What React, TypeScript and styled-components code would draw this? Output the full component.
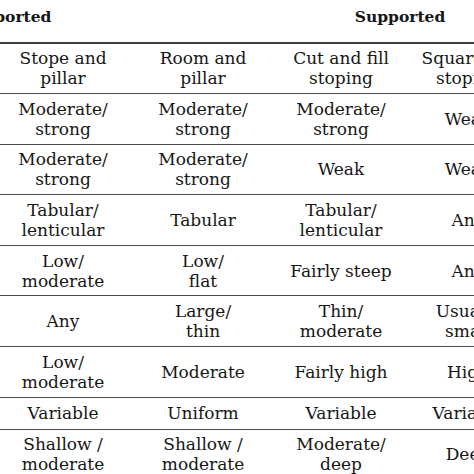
import { createGlobalStyle } from 'styled-components';
import styled from 'styled-components';

const serif = `"DejaVu Serif", "Liberation Serif", serif`;

const GlobalStyle = createGlobalStyle`
  html, body {
    margin: 0;
    padding: 0;
    background: #ffffff;
  }
  body {
    font-family: ${serif};
    color: #1c1c1c;
  }
`;

const Viewport = styled.div`
  width: 474px;
  height: 474px;
  overflow: hidden;
  background: #ffffff;
`;

// the table is wider than the crop; the two leftmost method columns sit off-screen
const Table = styled.table`
  margin-left: -283px;
  width: 810px;
  table-layout: fixed;
  border-collapse: collapse;
  font-family: ${serif};
  font-size: 17px;
  line-height: 20px;
  color: #161616;
`;

const GroupCell = styled.th`
  padding: 7px 0 14.5px;
  font-family: ${serif};
  font-size: 15.5px;
  font-weight: 700;
  text-align: center;
  white-space: nowrap;
  border-bottom: 2.2px solid #3c3c3c;
`;

const Cell = styled.td<{ $single?: boolean }>`
  padding: ${(p) => (p.$single ? '5.5px 0' : '4.8px 0')};
  font-family: ${serif};
  text-align: center;
  vertical-align: middle;
  white-space: nowrap;
  font-weight: 400;
  border-bottom: 1.6px solid #4a4a4a;
`;

const widths = [138, 138, 140, 140, 136, 118];

const rows: string[][][] = [
  [['Sublevel', 'stoping'], ['Shrinkage', 'stoping'], ['Stope and', 'pillar'], ['Room and', 'pillar'], ['Cut and fill', 'stoping'], ['Square set', 'stoping']],
  [['Moderate/', 'strong'], ['Strong'], ['Moderate/', 'strong'], ['Moderate/', 'strong'], ['Moderate/', 'strong'], ['Weak']],
  [['Fairly', 'strong'], ['Strong/', 'moderate'], ['Moderate/', 'strong'], ['Moderate/', 'strong'], ['Weak'], ['Weak']],
  [['Tabular/', 'lenticular'], ['Tabular/', 'lenticular'], ['Tabular/', 'lenticular'], ['Tabular'], ['Tabular/', 'lenticular'], ['Any']],
  [['Fairly', 'steep'], ['Fairly', 'steep'], ['Low/', 'moderate'], ['Low/', 'flat'], ['Fairly steep'], ['Any']],
  [['Thick/', 'large'], ['Thin/', 'moderate'], ['Any'], ['Large/', 'thin'], ['Thin/', 'moderate'], ['Usually', 'small']],
  [['Moderate'], ['Fairly high'], ['Low/', 'moderate'], ['Moderate'], ['Fairly high'], ['High']],
  [['Fairly uniform'], ['Uniform'], ['Variable'], ['Uniform'], ['Variable'], ['Variable']],
  [['Moderate'], ['Shallow/', 'moderate'], ['Shallow /', 'moderate'], ['Shallow /', 'moderate'], ['Moderate/', 'deep'], ['Deep']],
];

function Lines({ lines }: { lines: string[] }) {
  return (
    <>
      {lines.map((line, i) => (
        <span key={i}>
          {i > 0 && <br />}
          {line}
        </span>
      ))}
    </>
  );
}

export default function App() {
  return (
    <Viewport>
      <GlobalStyle />
      <Table>
        <colgroup>
          {widths.map((w, i) => (
            <col key={i} style={{ width: w }} />
          ))}
        </colgroup>
        <thead>
          <tr>
            <GroupCell colSpan={4}>Unsupported</GroupCell>
            <GroupCell colSpan={2}>Supported</GroupCell>
          </tr>
        </thead>
        <tbody>
          {rows.map((row, r) => {
            const single = row.every((cell) => cell.length === 1);
            return (
              <tr key={r}>
                {row.map((cell, c) => (
                  <Cell key={c} $single={single}>
                    <Lines lines={cell} />
                  </Cell>
                ))}
              </tr>
            );
          })}
        </tbody>
      </Table>
    </Viewport>
  );
}
